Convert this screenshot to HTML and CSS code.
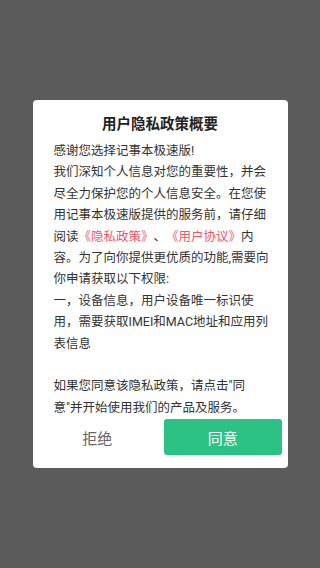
FILE: index.html
```html
<!DOCTYPE html>
<html lang="zh-CN">
<head>
    <meta charset="UTF-8">
    <meta name="viewport" content="width=device-width, initial-scale=1.0">
    <title>用户隐私政策概要</title>
    <link rel="stylesheet" href="styles.css">
</head>
<body>
    <div class="mask">
        <!-- Privacy dialog -->
        <div class="dialog">
            <div class="dialog-title">用户隐私政策概要</div>
            <div class="dialog-body">
                <p>感谢您选择记事本极速版!</p>
                <p>我们深知个人信息对您的重要性，并会尽全力保护您的个人信息安全。在您使用记事本极速版提供的服务前，请仔细阅读<a href="#">《隐私政策》</a>、<a href="#">《用户协议》</a>内容。为了向你提供更优质的功能,需要向你申请获取以下权限:</p>
                <p>一，设备信息，用户设备唯一标识使用，需要获取IMEI和MAC地址和应用列表信息</p>
                <p class="gap">如果您同意该隐私政策，请点击"同<br>意"并开始使用我们的产品及服务。</p>
            </div>
            <div class="dialog-buttons">
                <button class="btn btn-cancel">拒绝</button>
                <button class="btn btn-ok">同意</button>
            </div>
        </div>
    </div>
</body>
</html>
```

FILE: styles.css
```css
html, body {
    margin: 0;
    padding: 0;
}
body {
    font-family: Roboto, "Noto Sans CJK SC", sans-serif;
    background-color: #5b5b5b;
    text-spacing-trim: space-all;
}
.mask {
    width: 320px;
    height: 568px;
    display: flex;
    justify-content: center;
    padding-top: 100px;
    box-sizing: border-box;
}
.dialog {
    width: 255px;
    height: 368px;
    background-color: #fff;
    border-radius: 4px;
    box-sizing: border-box;
    display: flex;
    flex-direction: column;
    padding-bottom: 13px;
}
.dialog-title {
    text-align: center;
    font-size: 14.5px;
    font-weight: bold;
    color: #222;
    margin-top: 15px;
    line-height: 20px;
}
.dialog-body {
    padding: 5px 18px 0 21px;
    font-size: 12.5px;
    line-height: 21.4px;
    color: #333;
}
.dialog-body p {
    margin: 0;
}
.dialog-body p.gap {
    margin-top: 21.4px;
}
.dialog-body a {
    color: #f0566b;
    text-decoration: none;
}
.dialog-buttons {
    display: flex;
    gap: 8px;
    padding: 0 6px;
    margin-top: auto;
}
.btn {
    flex: 1;
    height: 36px;
    border: none;
    border-radius: 3px;
    font-family: inherit;
    font-size: 15px;
    cursor: pointer;
}
.btn-cancel {
    background: none;
    color: #666;
}
.btn-ok {
    background-color: #2cc285;
    color: #fff;
}
```
